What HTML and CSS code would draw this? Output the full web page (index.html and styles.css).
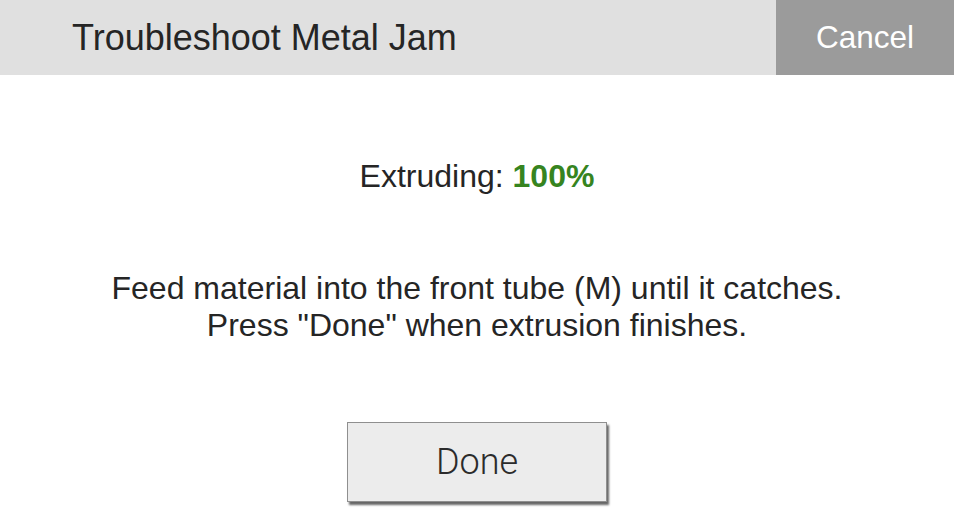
FILE: index.html
```html
<!DOCTYPE html>
<html lang="en">
<head>
  <meta charset="UTF-8">
  <meta name="viewport" content="width=device-width, initial-scale=1.0">
  <title>Troubleshoot Metal Jam</title>
  <link rel="stylesheet" href="styles.css">
</head>
<body>
  <div class="screen">
    <header class="titlebar">
      <h1 class="title">Troubleshoot Metal Jam</h1>
      <button class="cancel">Cancel</button>
    </header>

    <main class="content">
      <p class="status">Extruding: <span class="progress">100%</span></p>
      <p class="instructions">
        Feed material into the front tube (M) until it catches.<br>
        Press "Done" when extrusion finishes.
      </p>
      <button class="done">Done</button>
    </main>
  </div>
</body>
</html>
```

FILE: styles.css
```css
body, html {
  margin: 0;
  padding: 0;
  background-color: #fff;
  font-family: "Liberation Sans", Arial, sans-serif;
  color: #252525;
}

.screen {
  width: 954px;
  height: 520px;
  display: flex;
  flex-direction: column;
  overflow: hidden;
}

.titlebar {
  height: 75px;
  display: flex;
  align-items: stretch;
  background-color: #e0e0e0;
}

.title {
  flex: 1;
  margin: 0;
  padding-left: 72px;
  display: flex;
  align-items: center;
  font-size: 36px;
  font-weight: normal;
  color: #252525;
}

.cancel {
  width: 178px;
  border: none;
  background-color: #9b9b9b;
  color: #fff;
  font-family: inherit;
  font-size: 31.5px;
  padding: 0;
}

.content {
  flex: 1;
  display: flex;
  flex-direction: column;
  align-items: center;
  text-align: center;
}

.status {
  margin: 83px 0 0;
  font-size: 32px;
  line-height: 36px;
}

.progress {
  color: #36841f;
  font-weight: bold;
}

.instructions {
  margin: 76px 0 0;
  font-size: 32px;
  line-height: 37px;
}

.done {
  margin-top: 78px;
  width: 260px;
  height: 80px;
  border: 1px solid #8f8f8f;
  background-color: #ececec;
  box-shadow: 2px 3px 2px rgba(0, 0, 0, 0.6);
  font-family: Roboto, "Liberation Sans", sans-serif;
  font-weight: 300;
  font-size: 36px;
  color: #2b2b2b;
  padding: 0;
}
```
